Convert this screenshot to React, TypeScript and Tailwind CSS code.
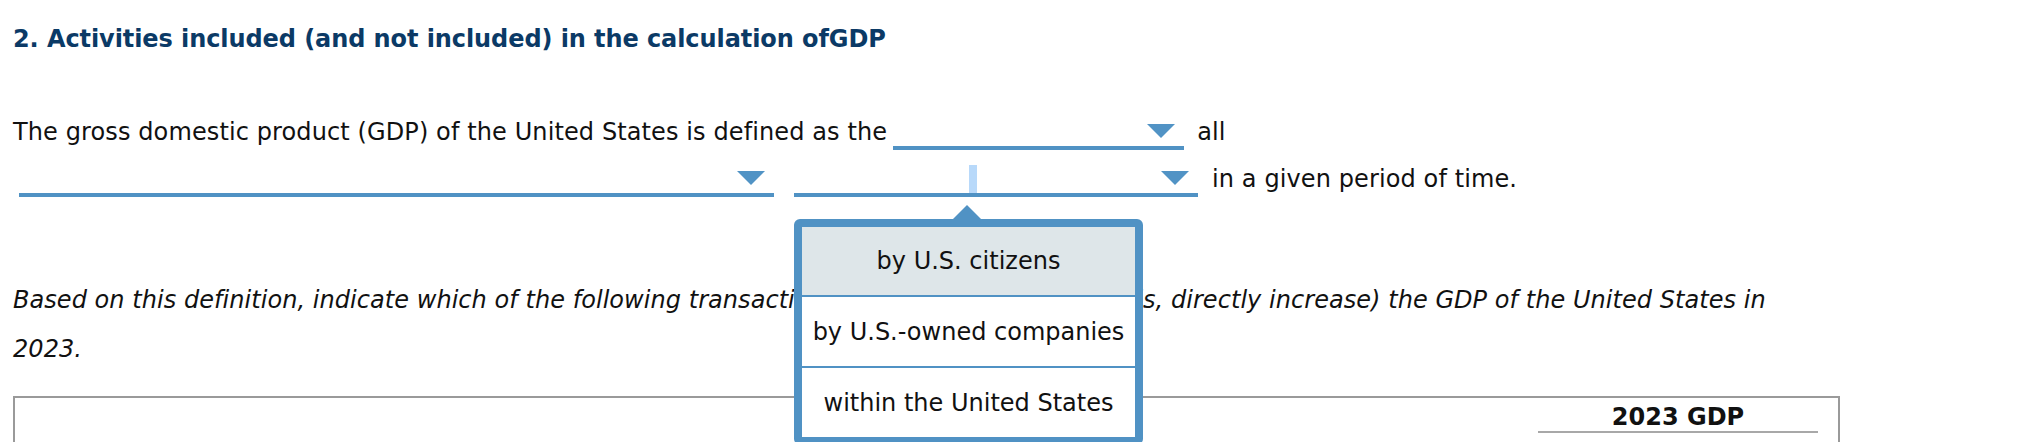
import React from "react";

function Arrow() {
  return (
    <svg width="28" height="14" viewBox="0 0 28 14" className="inline-block align-[2px]">
      <polygon points="0,0 28,0 14,14" fill="#5193c5" />
    </svg>
  );
}

function Dropdown({ w, cls, children }: { w: string; cls: string; children?: React.ReactNode }) {
  return (
    <span className={`relative inline-block leading-[28px] border-b-4 border-[#5092c4] text-right pr-[9px] tracking-normal ${w} ${cls}`}>
      <Arrow />
      {children}
    </span>
  );
}

const options = ["by U.S. citizens", "by U.S.-owned companies", "within the United States"];

export default function App() {
  return (
    <div className="min-h-[442px] bg-white pl-[13px] pt-[24px] font-['DejaVu_Sans',Verdana,sans-serif] text-[24px] text-[#111]">
      <h2 className="leading-[30px] font-bold text-[#0b3a66] tracking-[-0.08px]">
        2. Activities included (and not included) in the calculation ofGDP
      </h2>
      <p className="mt-[55px] leading-[47px] tracking-[0.11px]">
        The gross domestic product (GDP) of the United States is defined as the
        <Dropdown w="w-[291px]" cls="ml-[6px] mr-[13px]" />
        all
        <br />
        <Dropdown w="w-[755px]" cls="ml-[6px]" />
        <Dropdown w="w-[404px]" cls="ml-[20px] mr-[14px]">
          <span className="absolute left-[175px] top-0 bottom-0 w-[8px] bg-[#b8d9fa]" />
          <span className="absolute left-0 top-[54px] z-10 block w-[349px] text-center">
            <svg width="28" height="14" viewBox="0 0 28 14" className="absolute left-[159px] top-[-14px] block">
              <polygon points="0,14 14,0 28,14" fill="#5092c4" />
            </svg>
            <span className="block rounded-[6px] border-[8px] border-[#5092c4] bg-white">
              {options.map((o, i) => (
                <span
                  key={o}
                  className={`flex items-center justify-center text-[#111] ${i === 0 ? "h-[68px] bg-[#dee6e9]" : "h-[71px] border-t-2 border-[#5092c4]"}`}
                >
                  {o}
                </span>
              ))}
            </span>
          </span>
        </Dropdown>
        in a given period of time.
      </p>
      <p className="mt-[73px] leading-[49px] italic tracking-[0.05px]">
        Based on this definition, indicate which of the following transactions will be included in (that is, directly increase) the GDP of the United States in
        <br />
        2023.
      </p>
      <div className="mt-[22px] w-[1827px] h-[60px] border-2 border-b-0 border-[#9a9a9a]">
        <div className="flex justify-end pr-[20px] pt-[5px]">
          <div className="w-[280px] text-center font-bold leading-[28px] border-b-2 border-[#a8a8a8] text-[#111]">
            2023 GDP
          </div>
        </div>
      </div>
    </div>
  );
}
